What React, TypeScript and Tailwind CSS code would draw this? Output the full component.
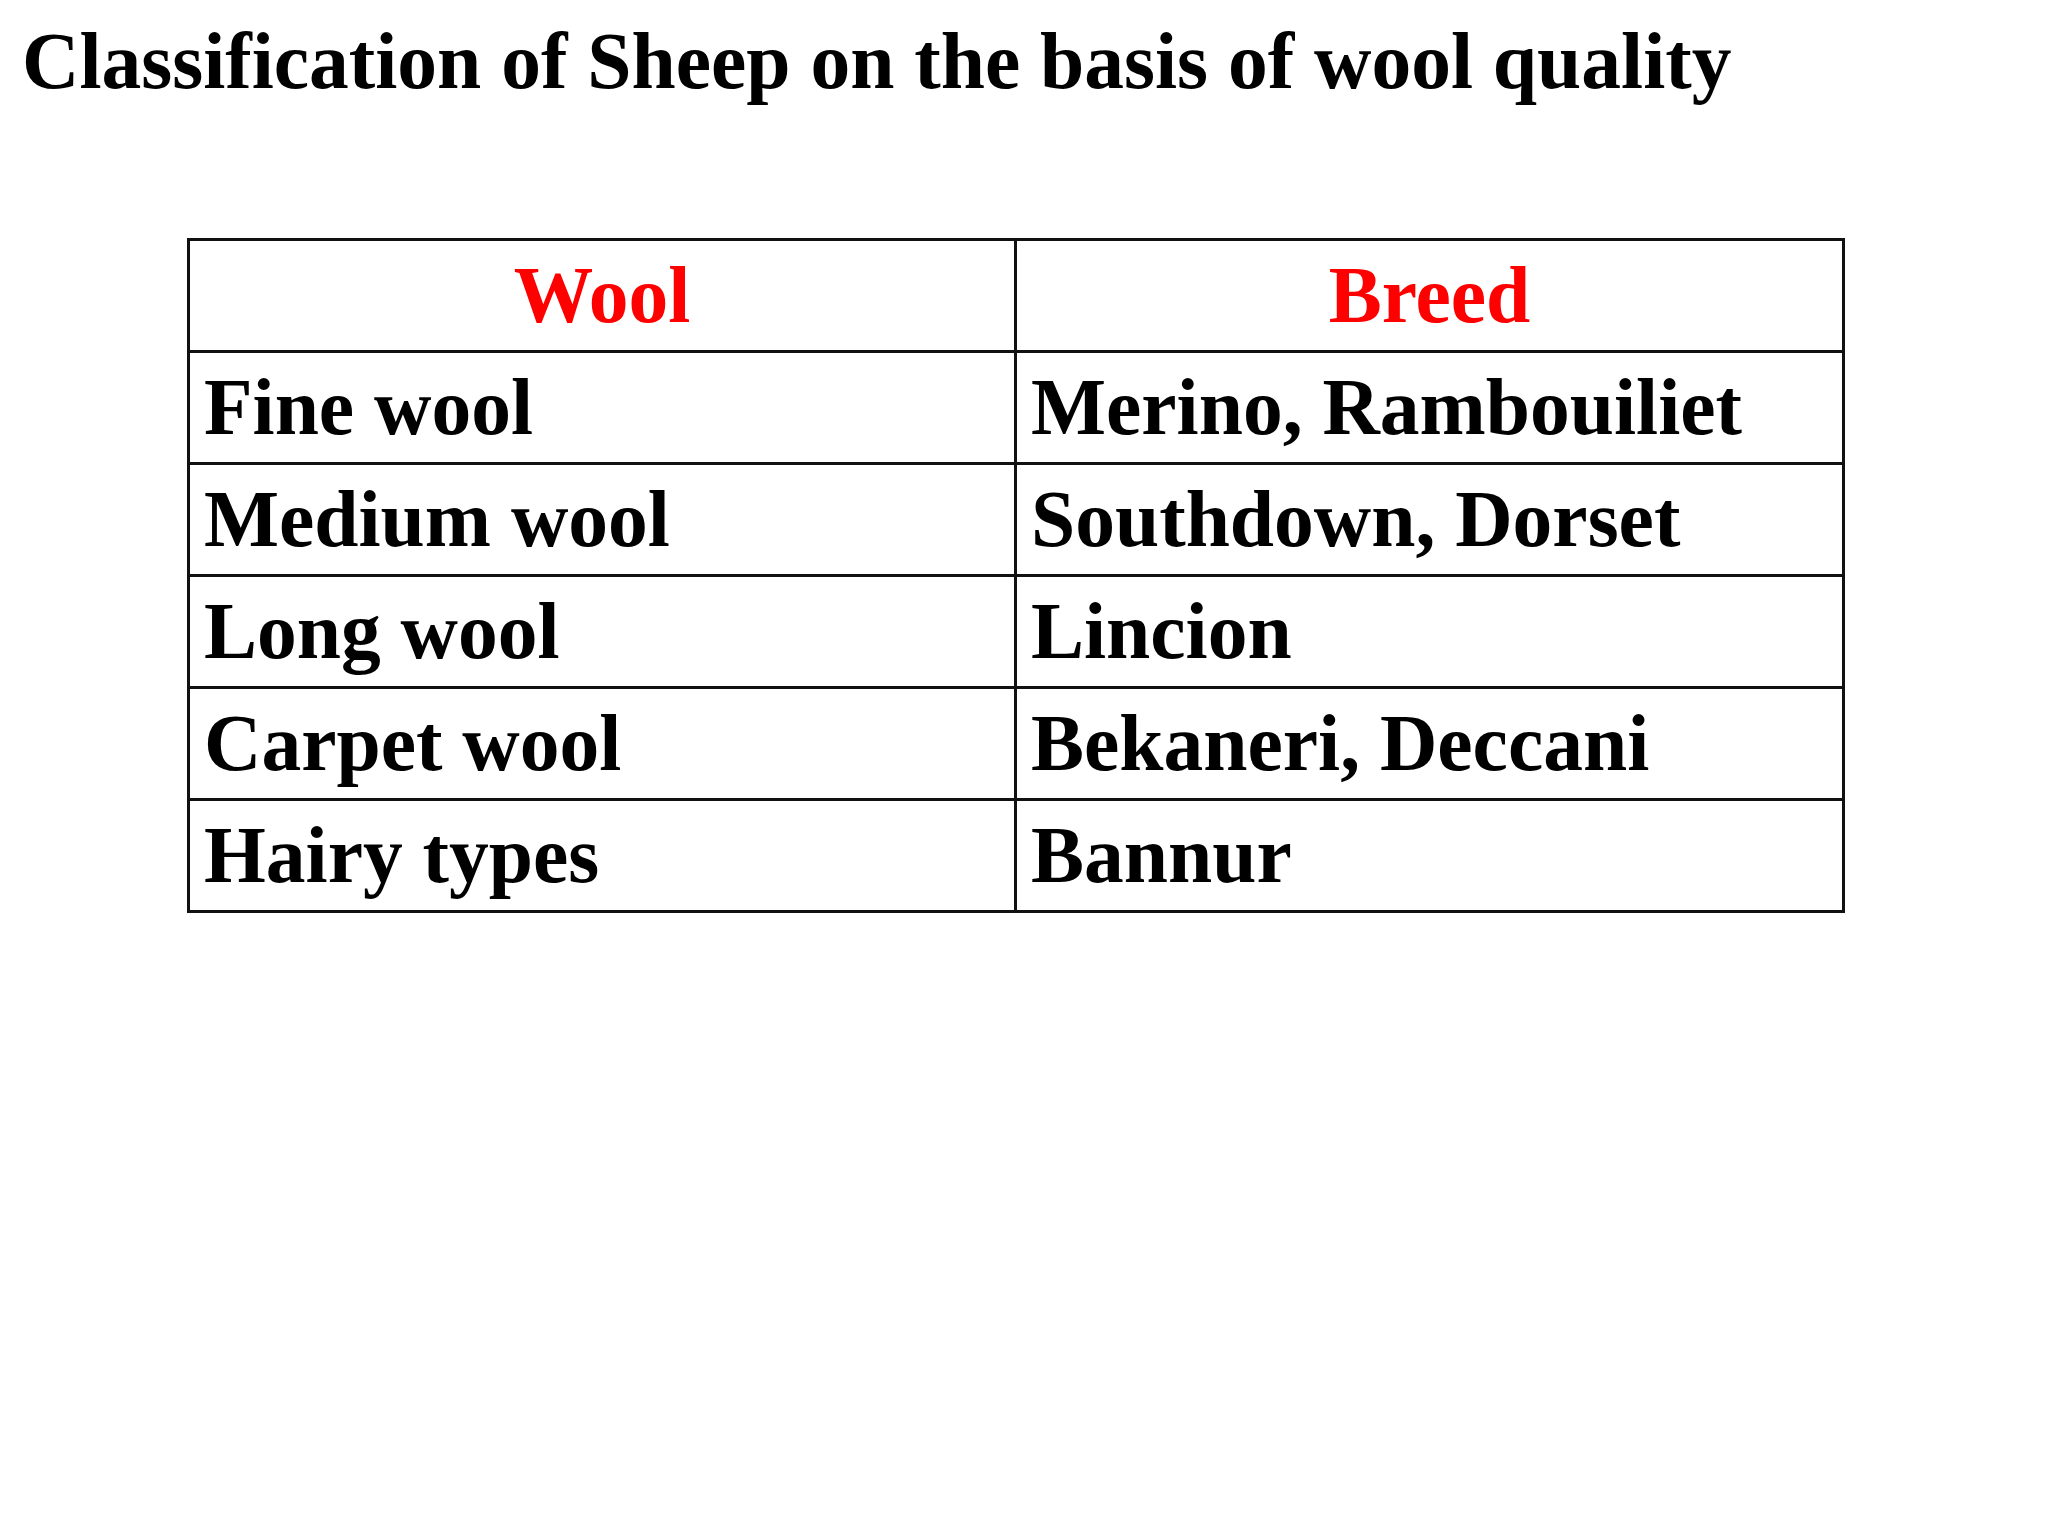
import React from 'react';

const rows: [string, string][] = [
  ['Fine wool', 'Merino, Rambouiliet'],
  ['Medium wool', 'Southdown, Dorset'],
  ['Long wool', 'Lincion'],
  ['Carpet wool', 'Bekaneri, Deccani'],
  ['Hairy types', 'Bannur'],
];

const App: React.FC = () => {
  return (
    <div
      className="w-[2048px] h-[1536px] bg-white text-black font-bold"
      style={{ fontFamily: '"Liberation Serif", "Times New Roman", serif' }}
    >
      {/* Title */}
      <h1 className="pt-[22px] pl-[22px] text-[79.5px] leading-none font-bold">
        Classification of Sheep on the basis of wool quality
      </h1>

      {/* Table */}
      <table className="mt-[136px] ml-[187px] w-[1655px] border-collapse table-fixed">
        <colgroup>
          <col className="w-[827px]" />
          <col className="w-[828px]" />
        </colgroup>
        <thead>
          <tr className="h-[112px]">
            <th className="border-[3px] border-[#111] text-[79.5px] leading-none text-[#ff0000] text-center align-top pt-[15px] font-bold">
              Wool
            </th>
            <th className="border-[3px] border-[#111] text-[79.5px] leading-none text-[#ff0000] text-center align-top pt-[15px] font-bold">
              Breed
            </th>
          </tr>
        </thead>
        <tbody>
          {rows.map(([wool, breed]) => (
            <tr key={wool} className="h-[112px]">
              <td className="border-[3px] border-[#111] text-[79.5px] leading-none text-left align-top pt-[15px] pl-[14px]">
                {wool}
              </td>
              <td className="border-[3px] border-[#111] text-[79.5px] leading-none text-left align-top pt-[15px] pl-[14px]">
                {breed}
              </td>
            </tr>
          ))}
        </tbody>
      </table>
    </div>
  );
};

export default App;
